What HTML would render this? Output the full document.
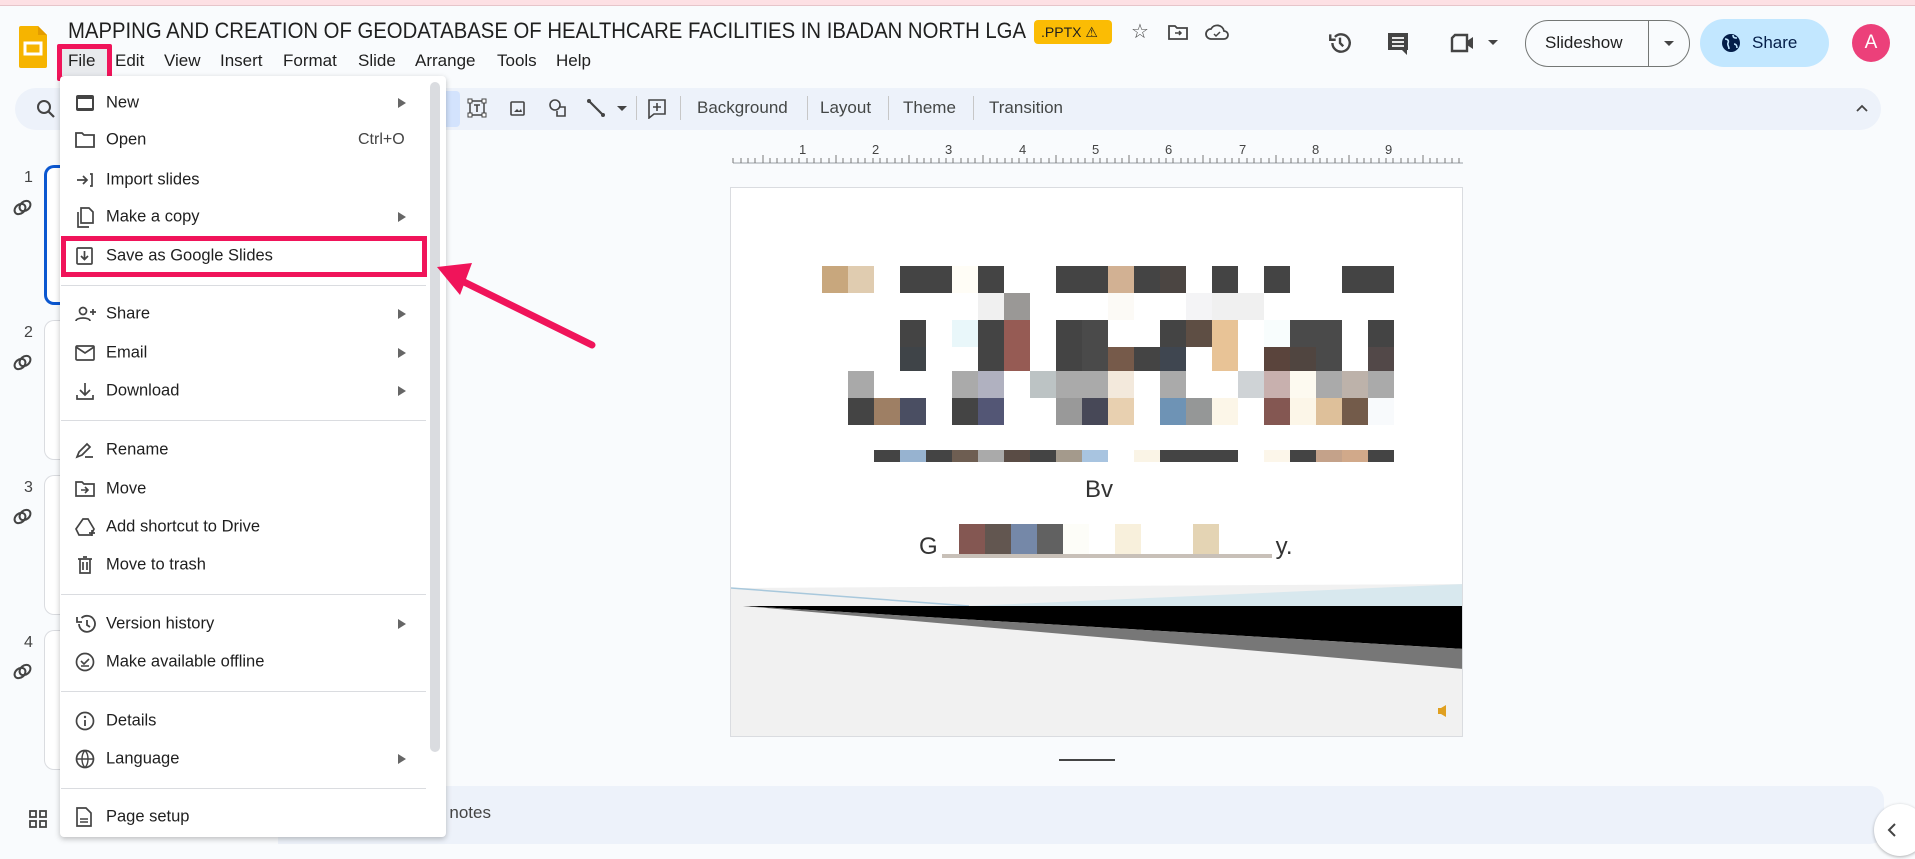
<!DOCTYPE html>
<html><head><meta charset="utf-8"><style>
*{box-sizing:border-box;margin:0;padding:0}
body{width:1915px;height:859px;overflow:hidden;background:#f9fbfd;font-family:"Liberation Sans",sans-serif;color:#1f1f1f;position:relative}
.a{position:absolute}
.mi{position:absolute;left:106px;font-size:16.5px;color:#1f1f1f;transform:translateY(-50%)}
.ic{position:absolute;left:75px;transform:translateY(-50%)}
.arr{position:absolute;left:398px;width:0;height:0;border-top:5px solid transparent;border-bottom:5px solid transparent;border-left:8px solid #666;transform:translateY(-50%)}
.sep{position:absolute;left:61px;width:365px;height:1px;background:#dadce0}
.tb{position:absolute;top:108px;transform:translateY(-50%);font-size:17px;color:#444746}
.tsep{position:absolute;top:96px;width:1px;height:24px;background:#c7c7c7}
.num{position:absolute;left:24px;font-size:16px;color:#444}
.thumb{position:absolute;left:44px;width:30px;border:1px solid #dadce0;border-right:none;border-radius:10px 0 0 10px;background:#fff}
</style></head><body>
<div class="a" style="left:0;top:0;width:1915px;height:6px;background:#fde0e4;border-bottom:1px solid #e6c5ca"></div>
<svg class="a" style="left:19px;top:26px" width="28" height="42" viewBox="0 0 28 42"><path d="M2 0h17l9 9v31a2 2 0 0 1-2 2H2a2 2 0 0 1-2-2V2a2 2 0 0 1 2-2z" fill="#f6b400"/><path d="M19 0l9 9h-9z" fill="#e39c00"/><rect x="6" y="17" width="16" height="11" fill="none" stroke="#fff" stroke-width="3"/></svg>
<svg class="a" style="left:68px;top:14px" width="965" height="32"><text x="0" y="24" font-family="Liberation Sans" font-size="22" fill="#1f1f1f" textLength="958" lengthAdjust="spacingAndGlyphs">MAPPING AND CREATION OF GEODATABASE OF HEALTHCARE FACILITIES IN IBADAN NORTH LGA</text></svg>
<div class="a" style="left:1034px;top:20px;width:78px;height:24px;background:#fbbc04;border-radius:4px;font-size:14px;color:#1f1f1f;padding:4px 0 0 7px">.PPTX ⚠</div>
<div class="a" style="left:1131px;top:19px;font-size:20px;color:#444">☆</div>
<svg class="a" style="left:1168px;top:24px" width="20" height="16"><path d="M1 2h6l2 2h10v11H1z" fill="none" stroke="#444" stroke-width="1.8"/><path d="M7 9h6M11 7l2 2-2 2" stroke="#444" stroke-width="1.5" fill="none"/></svg>
<svg class="a" style="left:1205px;top:24px" width="24" height="16"><path d="M6 15a5 5 0 0 1 0-10a7 7 0 0 1 13 2a4 4 0 0 1 0 8z" fill="none" stroke="#444" stroke-width="1.8"/><path d="M9 10l2 2 4-4" stroke="#444" stroke-width="1.5" fill="none"/></svg>
<div class="a" style="left:57px;top:44px;width:55px;height:37px;border:5px solid #f0145a;border-radius:2px;background:#e8eaed"></div>
<div class="a" style="top:51px;left:68px;font-size:17px;color:#1f1f1f">File</div>
<div class="a" style="top:51px;left:115px;font-size:17px">Edit</div>
<div class="a" style="top:51px;left:164px;font-size:17px">View</div>
<div class="a" style="top:51px;left:220px;font-size:17px">Insert</div>
<div class="a" style="top:51px;left:283px;font-size:17px">Format</div>
<div class="a" style="top:51px;left:358px;font-size:17px">Slide</div>
<div class="a" style="top:51px;left:415px;font-size:17px">Arrange</div>
<div class="a" style="top:51px;left:497px;font-size:17px">Tools</div>
<div class="a" style="top:51px;left:556px;font-size:17px">Help</div>
<svg class="a" style="left:1327px;top:30px" width="26" height="26" viewBox="0 0 24 24"><path d="M5 12a8 8 0 1 0 2.3-5.6" fill="none" stroke="#444" stroke-width="2.2"/><path d="M3 4v5h5" fill="none" stroke="#444" stroke-width="2.2"/><path d="M12 7v5l3 3" fill="none" stroke="#444" stroke-width="2.2"/></svg>
<svg class="a" style="left:1386px;top:31px" width="24" height="26" viewBox="0 0 24 26"><path d="M2 2h20v17h-1v5l-5-5H2z" fill="#444"/><path d="M6 7h12M6 11h12M6 15h12" stroke="#fff" stroke-width="1.8"/></svg>
<svg class="a" style="left:1450px;top:32px" width="26" height="22" viewBox="0 0 26 22"><path d="M5 3h12v16H2V6z" fill="none" stroke="#444" stroke-width="2.4"/><path d="M17 9l6-4v12l-6-4z" fill="#444"/></svg>
<div class="a" style="left:1488px;top:40px;border-left:5px solid transparent;border-right:5px solid transparent;border-top:5px solid #444"></div>
<div class="a" style="left:1525px;top:20px;width:165px;height:47px;border:1px solid #747775;border-radius:24px"></div>
<div class="a" style="left:1648px;top:20px;width:1px;height:47px;background:#747775"></div>
<div class="a" style="left:1545px;top:33px;font-size:17px;color:#1f1f1f">Slideshow</div>
<div class="a" style="left:1664px;top:41px;border-left:5px solid transparent;border-right:5px solid transparent;border-top:5px solid #444"></div>
<div class="a" style="left:1700px;top:19px;width:129px;height:48px;background:#c2e7ff;border-radius:24px"></div>
<svg class="a" style="left:1721px;top:33px" width="20" height="20" viewBox="0 0 20 20"><circle cx="10" cy="10" r="9" fill="#041e49"/><path d="M4 6c3 0 4 2 3 4s1 3 1 6M12 2c0 3 2 3 4 3M13 11c2 0 3 2 3 4" stroke="#c2e7ff" stroke-width="1.6" fill="none"/></svg>
<div class="a" style="left:1752px;top:33px;font-size:17px;color:#041e49">Share</div>
<div class="a" style="left:1852px;top:24px;width:38px;height:38px;border-radius:50%;background:#ec407a;color:#fff;font-size:19px;text-align:center;line-height:38px">A</div>
<div class="a" style="left:15px;top:88px;width:1866px;height:42px;background:#edf2fa;border-radius:21px"></div>
<svg class="a" style="left:36px;top:99px" width="20" height="20"><circle cx="8" cy="8" r="6" fill="none" stroke="#444" stroke-width="2"/><path d="M12 12l6 6" stroke="#444" stroke-width="2.2"/></svg>
<div class="a" style="left:436px;top:91px;width:24px;height:36px;background:#d3e3fd;border-radius:4px"></div>
<svg class="a" style="left:467px;top:98px" width="20" height="20"><rect x="3" y="3" width="14" height="14" fill="none" stroke="#444" stroke-width="1.5"/><rect x="1" y="1" width="4" height="4" fill="#fff" stroke="#444"/><rect x="15" y="1" width="4" height="4" fill="#fff" stroke="#444"/><rect x="1" y="15" width="4" height="4" fill="#fff" stroke="#444"/><rect x="15" y="15" width="4" height="4" fill="#fff" stroke="#444"/><path d="M7 7h6M10 7v7" stroke="#444" stroke-width="1.6"/></svg>
<svg class="a" style="left:509px;top:100px" width="18" height="18"><rect x="2" y="2" width="13" height="13" rx="1" fill="none" stroke="#444" stroke-width="1.6"/><path d="M5 12l3-3 2 2 2-2 1 3z" fill="#444"/></svg>
<svg class="a" style="left:548px;top:98px" width="20" height="20"><circle cx="7" cy="7" r="5" fill="none" stroke="#444" stroke-width="1.6"/><path d="M12 9h5v9H9v-5" fill="none" stroke="#444" stroke-width="1.6"/></svg>
<svg class="a" style="left:586px;top:98px" width="20" height="20"><path d="M3 3l14 14" stroke="#444" stroke-width="2.2"/><circle cx="3" cy="3" r="2" fill="#444"/><circle cx="17" cy="17" r="2" fill="#444"/></svg>
<div class="a" style="left:617px;top:106px;border-left:5px solid transparent;border-right:5px solid transparent;border-top:5px solid #444"></div>
<div class="tsep" style="left:636px"></div>
<svg class="a" style="left:646px;top:97px" width="22" height="22"><path d="M3 3h16v14H8l-5 4z" fill="none" stroke="#444" stroke-width="1.6"/><path d="M11 6v8M7 10h8" stroke="#444" stroke-width="1.6"/></svg>
<div class="tsep" style="left:680px"></div>
<div class="tb" style="left:697px">Background</div>
<div class="tsep" style="left:807px"></div>
<div class="tb" style="left:820px">Layout</div>
<div class="tsep" style="left:888px"></div>
<div class="tb" style="left:903px">Theme</div>
<div class="tsep" style="left:973px"></div>
<div class="tb" style="left:989px">Transition</div>
<svg class="a" style="left:1855px;top:103px" width="14" height="10"><path d="M2 8l5-5 5 5" fill="none" stroke="#444" stroke-width="1.8"/></svg>
<svg class="a" style="left:730px;top:140px" width="735" height="26" font-family="Liberation Sans" font-size="13" fill="#444">
<line x1="3" y1="23" x2="733" y2="23" stroke="#9aa0a6"/>
<g stroke="#777">
<path d="M3 23v-5M11 23v-5M18 23v-5M25 23v-5M33 23v-8M40 23v-5M47 23v-5M55 23v-5M62 23v-5M69 23v-5M77 23v-5M84 23v-5M91 23v-5M99 23v-5M106 23v-8M113 23v-5M121 23v-5M128 23v-5M135 23v-5M143 23v-5M150 23v-5M157 23v-5M165 23v-5M172 23v-5M179 23v-8M187 23v-5M194 23v-5M201 23v-5M209 23v-5M216 23v-5M223 23v-5M231 23v-5M238 23v-5M245 23v-5M253 23v-8M260 23v-5M267 23v-5M275 23v-5M282 23v-5M289 23v-5M297 23v-5M304 23v-5M311 23v-5M319 23v-5M326 23v-8M333 23v-5M341 23v-5M348 23v-5M355 23v-5M363 23v-5M370 23v-5M377 23v-5M385 23v-5M392 23v-5M399 23v-8M407 23v-5M414 23v-5M421 23v-5M429 23v-5M436 23v-5M443 23v-5M451 23v-5M458 23v-5M465 23v-5M473 23v-8M480 23v-5M487 23v-5M495 23v-5M502 23v-5M509 23v-5M517 23v-5M524 23v-5M531 23v-5M539 23v-5M546 23v-8M553 23v-5M561 23v-5M568 23v-5M575 23v-5M583 23v-5M590 23v-5M597 23v-5M605 23v-5M612 23v-5M619 23v-8M627 23v-5M634 23v-5M641 23v-5M649 23v-5M656 23v-5M663 23v-5M671 23v-5M678 23v-5M685 23v-5M693 23v-8M700 23v-5M707 23v-5M715 23v-5M722 23v-5M729 23v-5"/></g>
<text x="69" y="14">1</text><text x="142" y="14">2</text><text x="215" y="14">3</text><text x="289" y="14">4</text><text x="362" y="14">5</text><text x="435" y="14">6</text><text x="509" y="14">7</text><text x="582" y="14">8</text><text x="655" y="14">9</text></svg>
<div class="a" style="left:730px;top:187px;width:733px;height:550px;background:#fff;border:1px solid #dadce0;overflow:hidden">
<svg width="733" height="550" style="position:absolute;left:0;top:0">
<polygon points="0,400 733,396 733,550 0,550" fill="#f1f1f1"/>
<polygon points="238,418 733,396 733,418" fill="#d8e8ee"/>
<line x1="0" y1="400" x2="238" y2="418" stroke="#a8c8dc" stroke-width="1.5"/>
<polygon points="12,418 733,418 733,461" fill="#000"/>
<polygon points="12,418 733,461 733,481" fill="#777"/>
<path d="M710 520l5-3v12l-5-3h-3v-6z" fill="#e0a020"/>
</svg>
<div id="px" style="position:absolute;left:0;top:0"></div>
<div style="position:absolute;left:354px;top:288px;font-size:24px;color:#333">Bv</div>
<div style="position:absolute;left:188px;top:345px;font-size:24px;color:#333">G<span style="display:inline-block;width:338px"></span>y.</div>
</div>
<script>
(function(){
var rows=[
["#c8a77d","#e0ccb0","","#444","#444","#fffdf6","#444","","","#444","#444","#d2b193","#444","#4b4542","","#444","","#444","","","#444","#444"],
["","","","","","","#f0f0f0","#9a9896","","","","#fcfaf6","","","#f4f4f6","#f0f0f0","#f0f0f0","","","","",""],
["","","","#444","","#e9f7fa","#444","#965b54","","#444","#4a4a4a","","","#444","#5e4e44","#e8c396","","#f8fdfd","#4a4a4a","#4a4a4a","","#444"],
["","","","#3f4448","","","#444","#965b54","","#444","#4a4a4a","#765a4a","#444","#3f4650","","#e8c396","","#5a443c","#504540","#4a4a4a","","#524848"],
["","#a9a9a9","","","","#aaa","#b0b1c0","","#bcc3c4","#aaa","#aaa","#f3e9dc","","#aaa","","","#cfd3d6","#c8b0ae","#fdfaf0","#aaa","#bdb2aa","#aaa"],
["","#444","#9e7f64","#4a4e62","","#444","#535675","","","#999","#474857","#e8d0b0","","#6e93b5","#959797","#fcf6e8","","#845752","#fcf6e8","#dec09a","#735b4a","#f8fafc"]];
var r7=["","","#444","#97b3d0","#444","#6e5e52","#aaa","#5a4c45","#444","#a49a8c","#a8c4e0","","#faf4e6","#444","#444","#444","","#fcf6ea","#444","#c4a28a","#d1a98a","#444"];
var g=["#845752","#625650","#7588a8","#616161","#fdfdf8","","#f8f0dc","","","#e4d4b4"];
var h="",tops=[78,105,132,159,183,210];
rows.forEach(function(r,i){r.forEach(function(c,j){if(c)h+='<div style="position:absolute;left:'+(91+26*j)+'px;top:'+tops[i]+'px;width:26px;height:'+(i==3?24:27)+'px;background:'+c+'"></div>';});});
r7.forEach(function(c,j){if(c)h+='<div style="position:absolute;left:'+(91+26*j)+'px;top:262px;width:26px;height:12px;background:'+c+'"></div>';});
g.forEach(function(c,j){if(c)h+='<div style="position:absolute;left:'+(228+26*j)+'px;top:336px;width:26px;height:30px;background:'+c+'"></div>';});
h+='<div style="position:absolute;left:211px;top:366px;width:330px;height:4px;background:#c8c0b8"></div>';
document.getElementById("px").innerHTML=h;})();
</script>
<div class="a" style="left:1059px;top:759px;width:56px;height:2px;background:#444"></div>
<div class="a" style="left:278px;top:786px;width:1606px;height:58px;background:#edf2fa;border-radius:0 14px 14px 0"></div>
<div class="a" style="left:439px;top:803px;font-size:17px;color:#444">r notes</div>
<div class="a" style="left:1874px;top:804px;width:52px;height:52px;border-radius:50%;background:#fff;box-shadow:0 1px 3px rgba(0,0,0,.3)"></div>
<svg class="a" style="left:1887px;top:822px" width="10" height="16"><path d="M8 2l-6 6 6 6" fill="none" stroke="#444" stroke-width="2"/></svg>
<div class="num" style="top:169px">1</div><div class="num" style="top:324px">2</div><div class="num" style="top:479px">3</div><div class="num" style="top:634px">4</div>
<div class="thumb" style="top:165px;height:140px;border:3px solid #0b57d0;border-right:none"></div>
<div class="thumb" style="top:320px;height:140px"></div>
<div class="thumb" style="top:475px;height:140px"></div>
<div class="thumb" style="top:630px;height:140px"></div>
<svg class="a" style="left:12px;top:199px" width="22" height="18"><ellipse cx="8" cy="10" rx="6" ry="4.5" transform="rotate(-40 8 10)" fill="none" stroke="#444" stroke-width="2"/><ellipse cx="13" cy="7" rx="6" ry="4.5" transform="rotate(-40 13 7)" fill="none" stroke="#444" stroke-width="2"/></svg>
<svg class="a" style="left:12px;top:354px" width="22" height="18"><ellipse cx="8" cy="10" rx="6" ry="4.5" transform="rotate(-40 8 10)" fill="none" stroke="#444" stroke-width="2"/><ellipse cx="13" cy="7" rx="6" ry="4.5" transform="rotate(-40 13 7)" fill="none" stroke="#444" stroke-width="2"/></svg>
<svg class="a" style="left:12px;top:508px" width="22" height="18"><ellipse cx="8" cy="10" rx="6" ry="4.5" transform="rotate(-40 8 10)" fill="none" stroke="#444" stroke-width="2"/><ellipse cx="13" cy="7" rx="6" ry="4.5" transform="rotate(-40 13 7)" fill="none" stroke="#444" stroke-width="2"/></svg>
<svg class="a" style="left:12px;top:663px" width="22" height="18"><ellipse cx="8" cy="10" rx="6" ry="4.5" transform="rotate(-40 8 10)" fill="none" stroke="#444" stroke-width="2"/><ellipse cx="13" cy="7" rx="6" ry="4.5" transform="rotate(-40 13 7)" fill="none" stroke="#444" stroke-width="2"/></svg>
<svg class="a" style="left:29px;top:810px" width="18" height="18"><g fill="none" stroke="#444" stroke-width="1.8"><rect x="1" y="1" width="6" height="6"/><rect x="11" y="1" width="6" height="6"/><rect x="1" y="11" width="6" height="6"/><rect x="11" y="11" width="6" height="6"/></g></svg>
<div class="a" style="left:60px;top:76px;width:386px;height:761px;background:#fff;border-radius:4px;box-shadow:0 2px 6px rgba(0,0,0,.25)"></div>
<div class="a" style="left:430px;top:82px;width:10px;height:670px;background:#dadce0;border-radius:5px"></div>
<div class="a" style="left:61px;top:236px;width:366px;height:41px;border:5px solid #f0145a"></div>
<svg class="ic" style="top:103px" width="20" height="18"><rect x="1" y="1" width="18" height="16" rx="2" fill="#444"/><rect x="3" y="5" width="14" height="9" fill="#fff"/></svg>
<div class="mi" style="top:103px">New</div><div class="arr" style="top:103px"></div>
<svg class="ic" style="top:140px" width="20" height="16"><path d="M1 1h6l2 2h10v12H1z" fill="none" stroke="#444" stroke-width="1.8"/></svg>
<div class="mi" style="top:140px">Open</div><div class="a" style="left:358px;top:131px;font-size:16px;color:#444">Ctrl+O</div>
<svg class="ic" style="top:180px" width="20" height="16"><path d="M2 8h10M8 4l4 4-4 4M15 2h2v12h-2" fill="none" stroke="#444" stroke-width="1.7"/></svg>
<div class="mi" style="top:180px">Import slides</div>
<svg class="ic" style="top:217px" width="20" height="22"><path d="M6 2h8l4 4v11H6z M3 6v15h11" fill="none" stroke="#444" stroke-width="1.7"/></svg>
<div class="mi" style="top:217px">Make a copy</div><div class="arr" style="top:217px"></div>
<svg class="ic" style="top:256px" width="20" height="20"><rect x="2" y="2" width="15" height="16" rx="1" fill="none" stroke="#444" stroke-width="1.7"/><path d="M9.5 5v8M6 10l3.5 3.5L13 10" fill="none" stroke="#444" stroke-width="1.7"/></svg>
<div class="mi" style="top:256px">Save as Google Slides</div>
<div class="sep" style="top:285px"></div>
<svg class="ic" style="top:314px" width="22" height="16"><circle cx="8" cy="5" r="3.5" fill="none" stroke="#444" stroke-width="1.7"/><path d="M1 15c0-4 14-4 14 0M18 3v6M15 6h6" fill="none" stroke="#444" stroke-width="1.7"/></svg>
<div class="mi" style="top:314px">Share</div><div class="arr" style="top:314px"></div>
<svg class="ic" style="top:353px" width="20" height="16"><rect x="1" y="1" width="18" height="14" rx="1" fill="none" stroke="#444" stroke-width="1.7"/><path d="M1 2l9 6 9-6" fill="none" stroke="#444" stroke-width="1.7"/></svg>
<div class="mi" style="top:353px">Email</div><div class="arr" style="top:353px"></div>
<svg class="ic" style="top:391px" width="20" height="18"><path d="M10 1v11M5 8l5 5 5-5M2 13v4h16v-4" fill="none" stroke="#444" stroke-width="1.7"/></svg>
<div class="mi" style="top:391px">Download</div><div class="arr" style="top:391px"></div>
<div class="sep" style="top:420px"></div>
<svg class="ic" style="top:450px" width="20" height="18"><path d="M2 16l2-5 8-8 3 3-8 8z M10 16h8" fill="none" stroke="#444" stroke-width="1.7"/></svg>
<div class="mi" style="top:450px">Rename</div>
<svg class="ic" style="top:489px" width="20" height="16"><path d="M1 1h6l2 2h10v12H1z" fill="none" stroke="#444" stroke-width="1.7"/><path d="M6 9h7M10 6l3 3-3 3" fill="none" stroke="#444" stroke-width="1.6"/></svg>
<div class="mi" style="top:489px">Move</div>
<svg class="ic" style="top:527px" width="22" height="20"><path d="M8 2h5l6 10-3 6H4l-3-6z" fill="none" stroke="#444" stroke-width="1.7"/><path d="M17 13v6M14 16h6" stroke="#444" stroke-width="1.7"/></svg>
<div class="mi" style="top:527px">Add shortcut to Drive</div>
<svg class="ic" style="top:565px" width="20" height="20"><path d="M3 4h14M8 2h4M5 4v14h10V4M8 7v8M12 7v8" fill="none" stroke="#444" stroke-width="1.7"/></svg>
<div class="mi" style="top:565px">Move to trash</div>
<div class="sep" style="top:594px"></div>
<svg class="ic" style="top:624px" width="22" height="20"><path d="M4 10a8 8 0 1 0 2.5-6" fill="none" stroke="#444" stroke-width="1.8"/><path d="M2 3v5h5M12 6v5l3 2" fill="none" stroke="#444" stroke-width="1.8"/></svg>
<div class="mi" style="top:624px">Version history</div><div class="arr" style="top:624px"></div>
<svg class="ic" style="top:662px" width="20" height="20"><circle cx="10" cy="10" r="8.5" fill="none" stroke="#444" stroke-width="1.7"/><path d="M6 9l3 3 5-5M6 14h8" fill="none" stroke="#444" stroke-width="1.6"/></svg>
<div class="mi" style="top:662px">Make available offline</div>
<div class="sep" style="top:691px"></div>
<svg class="ic" style="top:721px" width="20" height="20"><circle cx="10" cy="10" r="8.5" fill="none" stroke="#444" stroke-width="1.7"/><path d="M10 9v6" stroke="#444" stroke-width="1.8"/><circle cx="10" cy="6" r="1.2" fill="#444"/></svg>
<div class="mi" style="top:721px">Details</div>
<svg class="ic" style="top:759px" width="20" height="20"><circle cx="10" cy="10" r="8.5" fill="none" stroke="#444" stroke-width="1.7"/><path d="M1.5 10h17M10 1.5c-4 4-4 13 0 17M10 1.5c4 4 4 13 0 17" fill="none" stroke="#444" stroke-width="1.4"/></svg>
<div class="mi" style="top:759px">Language</div><div class="arr" style="top:759px"></div>
<div class="sep" style="top:788px"></div>
<svg class="ic" style="top:817px" width="18" height="20"><path d="M2 1h9l5 5v13H2z" fill="none" stroke="#444" stroke-width="1.7"/><path d="M5 12h8M5 15h8" stroke="#444" stroke-width="1.5"/></svg>
<div class="mi" style="top:817px">Page setup</div>
<svg class="a" style="left:430px;top:255px" width="170" height="100"><path d="M162 90L28 24" stroke="#f0145a" stroke-width="7" stroke-linecap="round"/><polygon points="7,12 42,8 30,40" fill="#f0145a"/></svg>
</body></html>
